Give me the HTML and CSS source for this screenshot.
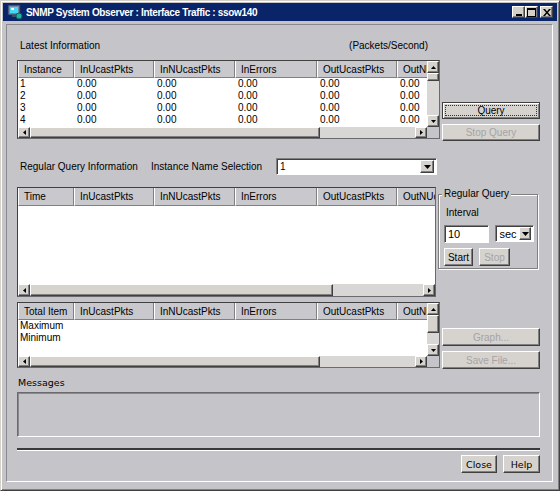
FILE: index.html
```html
<!DOCTYPE html>
<html>
<head>
<meta charset="utf-8">
<title>SNMP System Observer</title>
<link rel="stylesheet" href="styles.css">
</head>
<body>
<div class="window">
  <div class="titlebar">
    <svg class="appicon" width="16" height="16" viewBox="0 0 16 16">
      <rect x="1" y="1" width="12" height="10" fill="#6f86a8" stroke="#1d2f55" stroke-width="1"/>
      <rect x="3" y="3" width="8" height="6" fill="#46d8f0"/>
      <rect x="4" y="4" width="3" height="2" fill="#ffffff"/>
      <rect x="5" y="11" width="5" height="2" fill="#3a4e72"/>
      <circle cx="12" cy="12" r="3" fill="#1bb3a4" stroke="#0d5e58" stroke-width="1"/>
    </svg>
    <span class="title">SNMP System Observer : Interface Traffic : ssow140</span>
    <div class="capbtns">
      <span class="capbtn"><svg width="8" height="7" viewBox="0 0 8 7"><rect x="1" y="5" width="6" height="2" fill="#000"/></svg></span>
      <span class="capbtn"><svg width="9" height="9" viewBox="0 0 9 9"><rect x="0.5" y="0.5" width="8" height="8" fill="none" stroke="#000"/><rect x="0" y="0" width="9" height="2" fill="#000"/></svg></span>
      <span class="capbtn capclose"><svg width="8" height="7" viewBox="0 0 8 7"><path d="M0 0h2l2 2.5 2-2.5h2l-3 3.5 3 3.5h-2l-2-2.5-2 2.5h-2l3-3.5z" fill="#000"/></svg></span>
    </div>
  </div>
  <div class="client">
    <div class="panel">
      <div class="labels"><span>Latest Information</span><span>(Packets/Second)</span></div>

      <div class="section sec-top">
        <div class="tbl tbl-top">
          <div class="view">
            <div class="thead cols cols-409">
              <div class="th">Instance</div><div class="th">InUcastPkts</div><div class="th">InNUcastPkts</div><div class="th">InErrors</div><div class="th">OutUcastPkts</div><div class="th">OutNUcastPkts</div>
            </div>
            <div class="tbody">
              <div class="tr cols cols-409"><div class="td first">1</div><div class="td">0.00</div><div class="td">0.00</div><div class="td">0.00</div><div class="td">0.00</div><div class="td">0.00</div></div>
              <div class="tr cols cols-409"><div class="td first">2</div><div class="td">0.00</div><div class="td">0.00</div><div class="td">0.00</div><div class="td">0.00</div><div class="td">0.00</div></div>
              <div class="tr cols cols-409"><div class="td first">3</div><div class="td">0.00</div><div class="td">0.00</div><div class="td">0.00</div><div class="td">0.00</div><div class="td">0.00</div></div>
              <div class="tr cols cols-409"><div class="td first">4</div><div class="td">0.00</div><div class="td">0.00</div><div class="td">0.00</div><div class="td">0.00</div><div class="td">0.00</div></div>
            </div>
          </div>
          <div class="vscroll">
            <div class="sbtn"><svg width="5" height="3" viewBox="0 0 5 3"><path d="M2.5 0L5 3H0z" fill="#000"/></svg></div>
            <div class="vthumb vthumb-top"></div>
            <div class="track"></div>
            <div class="sbtn"><svg width="5" height="3" viewBox="0 0 5 3"><path d="M0 0h5L2.5 3z" fill="#000"/></svg></div>
          </div>
          <div class="hscroll">
            <div class="sbtn"><svg width="3" height="5" viewBox="0 0 3 5"><path d="M3 0v5L0 2.5z" fill="#000"/></svg></div>
            <div class="hthumb hthumb-top"></div>
            <div class="track"></div>
            <div class="sbtn"><svg width="3" height="5" viewBox="0 0 3 5"><path d="M0 0v5L3 2.5z" fill="#000"/></svg></div>
          </div>
          <div class="corner"></div>
        </div>
        <div class="side side-top">
          <div class="btn btn-default"><span class="focus">Query</span></div>
          <div class="btn disabled">Stop Query</div>
        </div>
      </div>

      <div class="rq-row">
        <span class="rq-label">Regular Query Information</span>
        <span class="ins-label">Instance Name Selection</span>
        <div class="combo combo-ins">
          <span class="combo-text">1</span>
          <span class="combo-btn"><svg width="7" height="4" viewBox="0 0 7 4"><path d="M0 0h7L3.5 4z" fill="#000"/></svg></span>
        </div>
      </div>

      <div class="section sec-mid">
        <div class="tbl tbl-mid">
          <div class="view">
            <div class="thead cols cols-417 mid-head">
              <div class="th">Time</div><div class="th">InUcastPkts</div><div class="th">InNUcastPkts</div><div class="th">InErrors</div><div class="th">OutUcastPkts</div><div class="th">OutNUcastPkts</div>
            </div>
            <div class="tbody"></div>
          </div>
          <div class="hscroll">
            <div class="sbtn"><svg width="3" height="5" viewBox="0 0 3 5"><path d="M3 0v5L0 2.5z" fill="#000"/></svg></div>
            <div class="hthumb hthumb-mid"></div>
            <div class="track"></div>
            <div class="sbtn"><svg width="3" height="5" viewBox="0 0 3 5"><path d="M0 0v5L3 2.5z" fill="#000"/></svg></div>
          </div>
        </div>
        <div class="group">
          <div class="legend">Regular Query</div>
          <div class="interval-label">Interval</div>
          <div class="interval-row">
            <div class="textbox">10</div>
            <div class="combo combo-sec">
              <span class="combo-text">sec</span>
              <span class="combo-btn"><svg width="7" height="4" viewBox="0 0 7 4"><path d="M0 0h7L3.5 4z" fill="#000"/></svg></span>
            </div>
          </div>
          <div class="start-row">
            <div class="btn btn-start">Start</div>
            <div class="btn disabled btn-stop">Stop</div>
          </div>
        </div>
      </div>

      <div class="section sec-bot">
        <div class="tbl tbl-bot">
          <div class="view">
            <div class="thead cols cols-409">
              <div class="th">Total Item</div><div class="th">InUcastPkts</div><div class="th">InNUcastPkts</div><div class="th">InErrors</div><div class="th">OutUcastPkts</div><div class="th">OutNUcastPkts</div>
            </div>
            <div class="tbody">
              <div class="tr cols cols-409"><div class="td first">Maximum</div></div>
              <div class="tr cols cols-409"><div class="td first">Minimum</div></div>
            </div>
          </div>
          <div class="vscroll">
            <div class="sbtn"><svg width="5" height="3" viewBox="0 0 5 3"><path d="M2.5 0L5 3H0z" fill="#000"/></svg></div>
            <div class="vthumb vthumb-bot"></div>
            <div class="track"></div>
            <div class="sbtn"><svg width="5" height="3" viewBox="0 0 5 3"><path d="M0 0h5L2.5 3z" fill="#000"/></svg></div>
          </div>
          <div class="hscroll">
            <div class="sbtn"><svg width="3" height="5" viewBox="0 0 3 5"><path d="M3 0v5L0 2.5z" fill="#000"/></svg></div>
            <div class="hthumb hthumb-top"></div>
            <div class="track"></div>
            <div class="sbtn"><svg width="3" height="5" viewBox="0 0 3 5"><path d="M0 0v5L3 2.5z" fill="#000"/></svg></div>
          </div>
          <div class="corner"></div>
        </div>
        <div class="side side-bot">
          <div class="btn disabled btn-tall">Graph...</div>
          <div class="btn disabled btn-tall">Save File...</div>
        </div>
      </div>

      <div class="msg-label">Messages</div>
      <div class="msg-box"></div>
      <div class="sep"></div>
      <div class="footer">
        <div class="btn fbtn btn-close">Close</div>
        <div class="btn fbtn btn-help">Help</div>
      </div>
    </div>
  </div>
</div>
</body>
</html>
```

FILE: styles.css
```css
* { box-sizing: border-box; }

body {
  margin: 0;
  background: #c5c4c8;
  font-family: "Liberation Sans", Arial, sans-serif;
  font-size: 10px;
  color: #000;
}

.window {
  width: 560px;
  height: 491px;
  background: #c5c4c8;
  border: 1px solid;
  border-color: #d4d0c8 #404040 #404040 #d4d0c8;
  box-shadow: inset 1px 1px 0 #fff, inset -1px -1px 0 #808080;
  padding: 2px;
  display: flex;
  flex-direction: column;
}

.titlebar {
  height: 18px;
  flex: none;
  background: #0a246a;
  display: flex;
  align-items: center;
  padding: 0 4px 0 4px;
  color: #fff;
}

.appicon { flex: none; margin-right: 3px; }

.title {
  font-weight: bold;
  font-size: 10px;
  letter-spacing: -0.33px;
  white-space: nowrap;
}

.capbtns {
  margin-left: auto;
  display: flex;
  align-items: center;
}

.capbtn {
  width: 13px;
  height: 12px;
  background: #d4d0c8;
  border: 1px solid;
  border-color: #fff #404040 #404040 #fff;
  box-shadow: inset -1px -1px 0 #808080;
  display: flex;
  align-items: center;
  justify-content: center;
}

.capclose { margin-left: 2px; }

.client {
  flex: 1;
  padding: 3px 4px 6px 3px;
  display: flex;
}

.panel {
  flex: 1;
  border: 1px solid;
  border-color: #8a898d #fff #fff #8a898d;
  padding: 14px 12px 0 10px;
  overflow: hidden;
}

.labels {
  width: 411px;
  height: 14px;
  line-height: 14px;
  display: flex;
  justify-content: space-between;
  padding-left: 3px;
}

.section { display: flex; align-items: flex-start; }
.sec-top { margin-top: 7px; gap: 2px; height: 79px; }
.sec-mid { margin-top: 12px; gap: 2px; }
.sec-bot { margin-top: 5px; gap: 2px; }

/* tables */
.tbl {
  display: grid;
  border: 1px solid;
  border-color: #404040 #6a696d #6a696d #404040;
  background: #c5c4c8;
}
.tbl-top { grid-template-columns: 409px 12px; grid-template-rows: 66px 11px; }
.tbl-mid { grid-template-columns: 417px; grid-template-rows: 96px 12px; }
.tbl-bot { grid-template-columns: 409px 12px; grid-template-rows: 53px 11px; }

.view {
  overflow: hidden;
  background: #fff;
  display: flex;
  flex-direction: column;
}

.cols { display: grid; }
.cols-409 { grid-template-columns: 56px 80px 81px 82px 80px 30px; width: 409px; }
.cols-417 { grid-template-columns: 56px 80px 81px 82px 80px 38px; width: 417px; }

.thead { height: 17px; flex: none; background: #c9c8cc; }
.mid-head { height: 18px; }

.th {
  border-left: 1px solid #fff;
  border-right: 1px solid #808080;
  border-bottom: 1px solid #808080;
  padding-left: 5px;
  display: flex;
  align-items: center;
  white-space: nowrap;
  overflow: hidden;
}
.th:last-child { border-right: 0; }

.tbody { flex: 1; }

.tr { height: 12px; line-height: 12px; }
.td { padding-left: 3px; white-space: nowrap; overflow: hidden; }
.td.first { padding-left: 2px; overflow: visible; }

/* scrollbars */
.vscroll { display: flex; flex-direction: column; background: #d9d7d6; }
.hscroll { display: flex; background: #d9d7d6; }

.sbtn {
  flex: none;
  width: 12px;
  height: 12px;
  background: #d6d3ce;
  border: 1px solid;
  border-color: #fff #404040 #404040 #fff;
  box-shadow: inset -1px -1px 0 #808080;
  display: flex;
  align-items: center;
  justify-content: center;
}
.hscroll .sbtn { height: 100%; }

.track { flex: 1; }

.vthumb, .hthumb {
  flex: none;
  background: #d6d3ce;
  border: 1px solid;
  border-color: #fff #404040 #404040 #fff;
  box-shadow: inset -1px -1px 0 #808080;
}
.vthumb-top { height: 8px; }
.vthumb-bot { height: 18px; }
.hthumb-top { width: 290px; }
.hthumb-mid { width: 303px; }

.corner { background: #c5c4c8; }

/* buttons */
.side { width: 98px; display: flex; flex-direction: column; gap: 5px; }
.side-top { padding-top: 42px; }
.side-bot { padding-top: 26px; }

.btn {
  height: 17px;
  background: #d6d3ce;
  border: 1px solid;
  border-color: #fff #404040 #404040 #fff;
  box-shadow: inset -1px -1px 0 #808080;
  display: flex;
  align-items: center;
  justify-content: center;
  white-space: nowrap;
}
.btn-tall { height: 18px; }

.btn-default {
  border-color: #404040;
  box-shadow: inset 1px 1px 0 #fff, inset -1px -1px 0 #808080;
  padding: 2px;
}
.focus {
  flex: 1;
  align-self: stretch;
  border: 1px dotted #333;
  display: flex;
  align-items: center;
  justify-content: center;
}

.disabled { color: #a4a3a7; }

/* regular query row */
.rq-row {
  margin-top: 19px;
  height: 17px;
  display: flex;
  align-items: center;
}
.rq-label { width: 134px; padding-left: 3px; }
.ins-label { width: 125px; }

.combo {
  height: 17px;
  background: #fff;
  border: 1px solid;
  border-color: #808080 #fff #fff #808080;
  box-shadow: inset 1px 1px 0 #404040;
  display: flex;
  align-items: center;
  padding: 2px 2px 2px 3px;
}
.combo-ins { width: 161px; }
.combo-text { flex: 1; }
.combo-btn {
  width: 14px;
  height: 13px;
  background: #d6d3ce;
  border: 1px solid;
  border-color: #fff #404040 #404040 #fff;
  box-shadow: inset -1px -1px 0 #808080;
  display: flex;
  align-items: center;
  justify-content: center;
}

/* group box */
.group {
  margin-top: 7px;
  width: 100px;
  height: 75px;
  border: 1px solid #808080;
  box-shadow: inset 1px 1px 0 #fff, 1px 1px 0 #fff;
  padding: 0 3px 0 5px;
}
.legend {
  width: max-content;
  height: 12px;
  line-height: 12px;
  margin: -7px 0 0 -2px;
  padding: 0 2px;
  background: #c5c4c8;
}
.interval-label { margin-top: 7px; height: 12px; line-height: 12px; padding-left: 2px; }
.interval-row { display: flex; gap: 6px; margin-top: 6px; }
.textbox {
  width: 46px;
  height: 18px;
  background: #fff;
  border: 1px solid;
  border-color: #808080 #fff #fff #808080;
  box-shadow: inset 1px 1px 0 #404040;
  padding: 2px 3px;
  line-height: 13px;
  font-size: 11px;
}
.combo-sec { width: 39px; height: 17px; font-size: 11px; }
.combo-sec .combo-btn { width: 12px; }
.start-row { display: flex; gap: 6px; margin-top: 5px; }
.btn-start { width: 29px; height: 18px; font-size: 10px; }
.btn-stop { width: 31px; height: 18px; font-size: 10px; }

/* messages */
.msg-label {
  margin-top: 7px;
  height: 14px;
  line-height: 14px;
  font-family: "DejaVu Sans", sans-serif;
  font-size: 9.5px;
  padding-left: 1px;
}
.msg-box {
  margin-top: 2px;
  width: 523px;
  height: 45px;
  border: 1px solid;
  border-color: #6a696d #fff #fff #6a696d;
  box-shadow: inset 1px 1px 0 #8a898d;
}

.sep {
  margin-top: 11px;
  width: 523px;
  height: 3px;
  border-top: 2px solid #3a393d;
  border-bottom: 1px solid #fff;
}

.footer {
  margin-top: 4px;
  width: 523px;
  display: flex;
  justify-content: flex-end;
  gap: 6px;
}
.fbtn {
  height: 18px;
  font-family: "DejaVu Sans", sans-serif;
  font-size: 9.5px;
}
.btn-close { width: 36px; }
.btn-help { width: 37px; }
```
